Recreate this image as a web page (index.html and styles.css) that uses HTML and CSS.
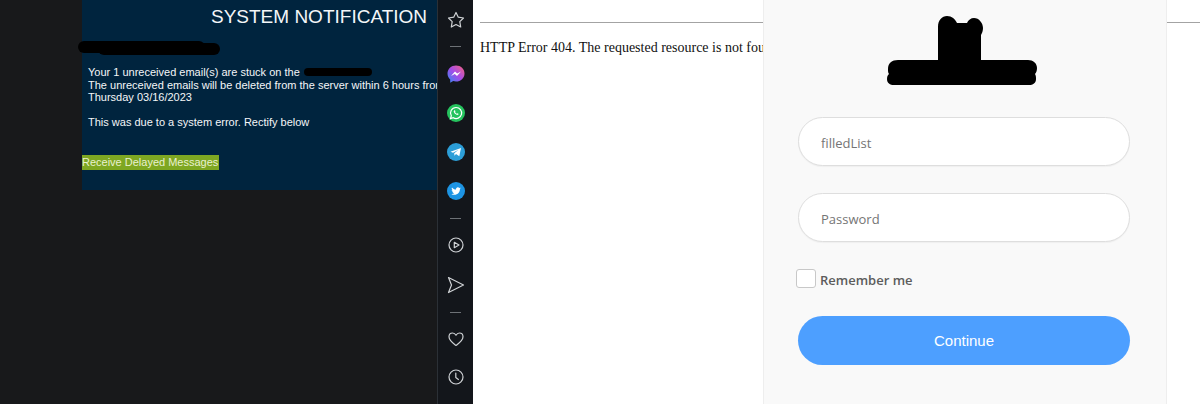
FILE: index.html
```html
<!DOCTYPE html>
<html lang="en">
<head>
  <meta charset="UTF-8" />
  <meta name="viewport" content="width=device-width, initial-scale=1.0"/>
  <title>System Notification</title>
  <link rel="stylesheet" href="styles.css">
</head>
<body>

<div class="screen">
  <section class="mail-pane">
    <div class="mail">
      <h1>SYSTEM NOTIFICATION</h1>
      <div class="mail-body">
        <p>Your 1 unreceived email(s) are stuck on the</p>
        <p>The unreceived emails will be deleted from the server within 6 hours from</p>
        <p>Thursday 03/16/2023</p>
        <p class="gap">This was due to a system error. Rectify below</p>
      </div>
      <a class="delayed" href="#">Receive Delayed Messages</a>
      <span class="blot blot-name"></span>
      <span class="blot blot-addr"></span>
    </div>
  </section>

  <nav class="sidebar">
    <svg class="icon" viewBox="0 0 18 18"><path class="line" d="M9 1.500L11.300 6.200 16.500 7 12.800 10.700 13.700 16 9 13.500 4.300 16 5.200 10.700 1.500 7 6.700 6.200z"/></svg>
    <span class="sep"></span>
    <svg class="icon" viewBox="0 0 18 18">
      <defs><linearGradient id="msg" x1="0" y1="1" x2="1" y2="0"><stop offset="0" stop-color="#2f8cf5"/><stop offset=".5" stop-color="#a44be8"/><stop offset="1" stop-color="#f8647c"/></linearGradient></defs>
      <path fill="url(#msg)" d="M9 .5C4.200 .5 .5 4 .5 8.600c0 2.400 1 4.500 2.700 6v3.200l3-1.700c.9 .3 1.800 .4 2.800 .4 4.800 0 8.500-3.500 8.500-8.100S13.800 .5 9 .5z"/>
      <path fill="#fff" d="M4 11L8 6.500 10.200 8.500 14 6.500 10 11 7.800 9z"/>
    </svg>
    <svg class="icon" viewBox="0 0 18 18">
      <circle cx="9" cy="9" r="9" fill="#25c35e"/>
      <path fill="none" stroke="#fff" stroke-width="1.200" d="M9 3.500a5.500 5.500 0 0 0-4.700 8.300L3.500 14.500l2.800-.8A5.500 5.500 0 1 0 9 3.500z"/>
      <path fill="#fff" d="M7.200 6.300c.4-.3 .7-.2 .9 .2l.4 .9-.5 .7c.4 .8 1 1.300 1.800 1.700l.6-.6 1 .5c.3 .2 .3 .6 0 .9-.6 .5-1.400 .5-2.300 0-1.100-.6-1.900-1.500-2.300-2.500-.2-.7-.1-1.300 .4-1.700z"/>
    </svg>
    <svg class="icon" viewBox="0 0 18 18">
      <circle cx="9" cy="9" r="9" fill="#2c9ed8"/>
      <path fill="#fff" d="M3.500 8.800L14 5 12.300 13.300 9 11 7.500 12.700 7.200 10.200 11.500 6.800 6 9.800z"/>
    </svg>
    <svg class="icon" viewBox="0 0 18 18">
      <circle cx="9" cy="9" r="9" fill="#1d94e3"/>
      <path fill="#fff" transform="scale(.692)" d="M20 8.800c-.5 .2-1 .4-1.600 .5 .6-.4 1-.9 1.200-1.500-.5 .3-1.100 .6-1.800 .7a2.800 2.800 0 0 0-4.800 2.500c-2.300-.1-4.400-1.200-5.800-3-.8 1.300-.4 3 .9 3.800-.5 0-.9-.1-1.300-.4 0 1.400 1 2.500 2.300 2.800-.4 .1-.8 .1-1.300 0 .4 1.100 1.400 1.900 2.600 2-1.200 .9-2.600 1.300-4.200 1.100 1.300 .8 2.700 1.300 4.400 1.300 5.300 0 8.300-4.500 8.100-8.500 .5-.4 1-.8 1.300-1.300z"/>
    </svg>
    <span class="sep sep-low"></span>
    <svg class="icon" viewBox="0 0 18 18"><circle class="line" cx="9" cy="9" r="7"/><path class="line" d="M7.300 6.300L12 9 7.300 11.700z"/></svg>
    <svg class="icon icon-send" viewBox="0 0 18 18"><path class="line" d="M1.500 1.500L16.500 9 1.500 16.500 4.500 9z"/></svg>
    <span class="sep sep-low"></span>
    <svg class="icon icon-heart" viewBox="0 0 18 18"><path class="line" d="M9 15.500C7.800 14.500 2 10.800 2 6.800 2 4.500 3.700 3 5.600 3 7 3 8.200 3.800 9 5.200 9.800 3.800 11 3 12.400 3 14.300 3 16 4.500 16 6.800c0 4-5.800 7.700-7 8.700z"/></svg>
    <svg class="icon" viewBox="0 0 18 18"><circle class="line" cx="9" cy="9" r="7"/><path class="line" d="M8.800 5V9.500l2.600 2"/></svg>
  </nav>

  <main class="error-page">
    <hr>
    <p class="error-text">HTTP Error 404. The requested resource is not found.</p>

    <form class="login">
      <svg class="logo" viewBox="0 0 150 70">
        <path d="M51 12C51 5 55 1 60 1 65 1 68 4 70 8H80C81 5 84 3 87 3 92 3 96 8 96 13 96 16 95 18 94 20V45H141C146 45 150 48 150 53 150 56 149 58 148 59 149 61 149 62 149 64 149 68 146 70 142 70H7C3 70 0 68 0 64 0 61 1 60 2 59 1 58 1 56 1 54 1 48 5 45 11 45H51z"/>
      </svg>
      <input class="field" type="text" placeholder="filledList">
      <input class="field" type="password" placeholder="Password">
      <label class="remember"><input type="checkbox"><span>Remember me</span></label>
      <button class="continue" type="button">Continue</button>
    </form>
  </main>
</div>

</body>
</html>
```

FILE: styles.css
```css
* {
  box-sizing: border-box;
}
html, body {
  margin: 0;
  height: 100%;
  overflow: hidden;
}
.screen {
  display: flex;
  width: 1200px;
  height: 404px;
}

/* left: the mail on the dark viewer */
.mail-pane {
  width: 437px;
  padding-left: 82px;
  background-color: #18191b;
  overflow: hidden;
}
.mail {
  position: relative;
  width: 355px;
  height: 190px;
  background-color: #00243e;
  color: #f4f6f8;
  font-family: "Liberation Sans", Arial, sans-serif;
}
.mail h1 {
  margin: 0;
  padding: 5px 0 0 129px;
  font-size: 19px;
  line-height: 23px;
  font-weight: normal;
  white-space: nowrap;
}
.mail-body {
  padding: 38px 0 0 6px;
  font-size: 11px;
  line-height: 12.6px;
  white-space: nowrap;
}
.mail-body p {
  margin: 0;
}
.mail-body .gap {
  margin-top: 12.6px;
}
.delayed {
  display: block;
  width: 137px;
  height: 15px;
  margin-top: 26px;
  background-color: #7ea722;
  color: #e9f1cf;
  font-size: 11px;
  line-height: 15px;
  text-decoration: none;
  white-space: nowrap;
}
.blot {
  position: absolute;
  background-color: #000;
  border-radius: 7px;
}
.blot-name {
  left: -4px;
  top: 41px;
  width: 127px;
  height: 12px;
}
.blot-name::after {
  content: "";
  position: absolute;
  left: 20px;
  top: 2px;
  width: 122px;
  height: 12px;
  background-color: #000;
  border-radius: 6px;
}
.blot-addr {
  left: 222px;
  top: 68px;
  width: 68px;
  height: 8px;
}

/* browser sidebar */
.sidebar {
  display: flex;
  flex-direction: column;
  align-items: center;
  width: 36px;
  padding-top: 7px;
  background-color: #13161b;
  border-left: 1px solid #2b3036;
}
.icon {
  flex: none;
  width: 18px;
  height: 18px;
  margin: 4px 0 17px;
}
.icon-send {
  margin-top: 5px;
}
.icon-heart {
  margin-bottom: 16px;
}
.line {
  fill: none;
  stroke: #cfd2d5;
  stroke-width: 1.2;
  stroke-linejoin: round;
  stroke-linecap: round;
}
.sep {
  flex: none;
  width: 11px;
  height: 1px;
  margin-bottom: 14px;
  background-color: #6d7176;
}
.sep-low {
  margin-top: 1px;
  margin-bottom: 13px;
}

/* right: 404 page with the login card over it */
.error-page {
  position: relative;
  flex: 1;
  padding: 22px 0 0 7px;
  background-color: #fff;
  overflow: hidden;
}
.error-page hr {
  margin: 0;
  border: 0;
  border-top: 1px solid #a3a3a3;
}
.error-text {
  margin: 16px 0 0;
  font-family: "Liberation Serif", "Times New Roman", serif;
  font-size: 14px;
  line-height: 18px;
  color: #111;
  white-space: nowrap;
}
.login {
  position: absolute;
  left: 290px;
  top: 0;
  display: flex;
  flex-direction: column;
  align-items: flex-start;
  width: 404px;
  height: 404px;
  padding: 15px 34px 0;
  background-color: #f9f9f9;
  border-left: 1px solid #eeeeee;
  border-right: 1px solid #eeeeee;
}
.logo {
  width: 150px;
  height: 70px;
  margin: 0 0 32px 89px;
}
.field {
  width: 332px;
  height: 49px;
  margin-bottom: 27px;
  padding: 2px 22px 0;
  background-color: #fff;
  border: 1px solid #dedede;
  border-radius: 25px;
  box-shadow: 0 1px 1px rgba(0, 0, 0, 0.04);
  font-family: "Open Sans", sans-serif;
  font-size: 13px;
  outline: none;
}
.field::placeholder {
  color: #757575;
  opacity: 1;
}
.remember {
  display: flex;
  align-items: center;
  gap: 4px;
  margin-left: -2px;
  font-family: "Open Sans", sans-serif;
  font-size: 13px;
  font-weight: 600;
  color: #5c5c5c;
}
.remember input {
  appearance: none;
  width: 20px;
  height: 19px;
  margin: 0;
  background-color: #fff;
  border: 1px solid #c8c8c8;
  border-radius: 3px;
}
.remember span {
  position: relative;
  top: 1px;
}
.continue {
  width: 332px;
  height: 49px;
  margin-top: 28px;
  background-color: #4d9fff;
  border: none;
  border-radius: 25px;
  color: #fff;
  font-family: "Liberation Sans", Arial, sans-serif;
  font-size: 15px;
}
```
